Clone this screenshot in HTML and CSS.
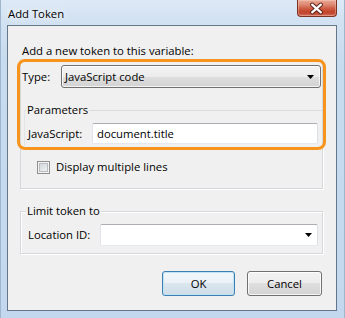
FILE: index.html
```html
<!DOCTYPE html>
<html>
<head>
<meta charset="utf-8">
<title>Add Token</title>
<link rel="stylesheet" href="styles.css">
</head>
<body>
<div class="window">
  <div class="titlebar">
    <span class="title">Add Token</span>
    <span class="close">
      <svg width="40" height="17" viewBox="0 0 40 17">
        <path d="M15.5 4.5 L24.5 12.5 M24.5 4.5 L15.5 12.5" stroke="#5b2219" stroke-width="4.2" stroke-linecap="round" fill="none"/>
        <path d="M15.5 4.5 L24.5 12.5 M24.5 4.5 L15.5 12.5" stroke="#ffffff" stroke-width="2.2" stroke-linecap="round" fill="none"/>
      </svg>
    </span>
  </div>
  <div class="client">
    <div class="heading">Add a new token to this variable:</div>
    <div class="group main">
      <div class="highlight">
        <div class="row type-row">
          <span class="label type-label">Type:</span>
          <div class="combo">
            <span class="combo-text">JavaScript code</span>
            <svg class="arrow" width="7" height="4" viewBox="0 0 7 4"><polygon points="0,0 7,0 3.5,4" fill="#000"/></svg>
          </div>
        </div>
        <div class="params">
          <div class="legend">Parameters</div>
          <div class="row js-row">
            <span class="label js-label">JavaScript:</span>
            <div class="textbox">document.title</div>
          </div>
        </div>
      </div>
      <div class="check-row">
        <span class="checkbox"></span>
        <span>Display multiple lines</span>
      </div>
    </div>
    <div class="group limit">
      <div class="legend">Limit token to</div>
      <div class="row loc-row">
        <span class="label loc-label">Location ID:</span>
        <div class="dropdown">
          <svg class="arrow" width="7" height="4" viewBox="0 0 7 4"><polygon points="0,0 7,0 3.5,4" fill="#000"/></svg>
        </div>
      </div>
    </div>
    <div class="buttons">
      <button class="btn default">OK</button>
      <button class="btn cancel">Cancel</button>
    </div>
  </div>
</div>
</body>
</html>
```

FILE: styles.css
```css
html, body {
  margin: 0;
  padding: 0;
}

body {
  font-family: "Open Sans", "Noto Sans", "DejaVu Sans", sans-serif;
  font-size: 11.3px;
  line-height: 16px;
  color: #000;
}

.window {
  width: 345px;
  height: 318px;
  box-sizing: border-box;
  display: flex;
  flex-direction: column;
  overflow: hidden;
  background: linear-gradient(180deg, #dde9f6 0px, #d2e2f2 20px, #c8dcef 60px, #c3d8ee 100%);
  box-shadow: inset 1px 0 0 #9fb6cf, inset -1px 0 0 #9fb6cf;
}

.titlebar {
  height: 25px;
  flex-shrink: 0;
  display: flex;
  align-items: flex-start;
  padding-left: 8px;
}

.title {
  margin-top: 6px;
  line-height: 16px;
  color: #000;
  text-shadow: 0 0 6px #ffffff, 0 0 10px #ffffff;
}

.close {
  margin-left: auto;
  margin-right: 8px;
  width: 40px;
  height: 17px;
  box-sizing: border-box;
  border: 1px solid #7a3325;
  border-top: 0;
  border-radius: 0 0 4px 4px;
  background: linear-gradient(180deg, #e9a996 0px, #dc8670 5px, #cf6148 8px, #c5492f 11px, #c0452d 13px, #d4735d 16px);
  box-shadow: inset 0 0 0 1px rgba(255, 220, 210, 0.35);
  display: flex;
}

.close svg {
  display: block;
  margin-left: -1px;
}

.client {
  flex: 1;
  margin: 0 8px 7px 7px;
  box-sizing: border-box;
  border: 1px solid #64768a;
  background: #f0f0f0;
  padding: 17px 13px 0 12px;
}

.heading {
  padding-left: 2px;
  height: 16px;
}

.group {
  border: 1px solid #d5d9dd;
  box-shadow: 1px 1px 0 #ffffff, inset 1px 1px 0 #ffffff;
}

.group.main {
  border-top: 0;
  box-shadow: 1px 1px 0 #ffffff;
}

.highlight {
  margin: 0 -4px;
  border: 3px solid #f7941d;
  border-radius: 8px;
  padding: 3px 0 0 0;
}

.row {
  display: flex;
  align-items: center;
}

.type-row {
  height: 23px;
  padding-left: 2px;
}

.type-label {
  width: 39px;
  flex-shrink: 0;
}

.combo {
  flex: 1;
  height: 23px;
  margin-right: 2px;
  box-sizing: border-box;
  border: 1px solid #707070;
  border-radius: 3px;
  background: linear-gradient(180deg, #f3f3f3 0%, #ececec 50%, #dfdfdf 50%, #d2d2d2 100%);
  box-shadow: inset 0 0 0 1px rgba(255, 255, 255, 0.75);
  display: flex;
  align-items: center;
  padding-left: 3px;
}

.combo .arrow {
  margin-left: auto;
  margin-right: 6px;
  display: block;
}

.params {
  margin: 22px 0 0 4px;
  border-left: 1px solid #e2e5e8;
  border-top: 1px solid #d9dcdf;
  padding: 0 0 3px 3px;
}

.legend {
  width: fit-content;
  margin: -9px 0 0 -2px;
  padding: 0 1px;
  height: 16px;
  background: #f0f0f0;
}

.js-row {
  margin-top: 5px;
  height: 21px;
}

.js-label {
  width: 64px;
  flex-shrink: 0;
}

.textbox {
  flex: 1;
  height: 21px;
  margin-right: 5px;
  box-sizing: border-box;
  background: #ffffff;
  border: 1px solid;
  border-color: #abadb3 #dbdfe6 #e3e9ef #e2e3ea;
  border-radius: 2px;
  padding-left: 4px;
  display: flex;
  align-items: center;
}

.check-row {
  margin-top: 9px;
  height: 16px;
  padding: 0 0 13px 16px;
  display: flex;
  align-items: center;
}

.checkbox {
  width: 13px;
  height: 13px;
  box-sizing: border-box;
  margin-right: 6px;
  border: 1px solid #8e8f8f;
  background: linear-gradient(135deg, #cdd1d6 0%, #e4e6e8 55%, #f7f7f7 100%);
  box-shadow: inset 0 0 0 1px #f4f4f4, inset 0 0 0 2px #b9bdc2;
}

.group.limit {
  margin-top: 22px;
  padding: 0 4px 7px 7px;
}

.loc-row {
  margin-top: 5px;
  height: 22px;
}

.loc-label {
  width: 72px;
  flex-shrink: 0;
}

.dropdown {
  flex: 1;
  height: 22px;
  box-sizing: border-box;
  background: #ffffff;
  border: 1px solid;
  border-color: #abadb3 #dbdfe6 #e3e9ef #e2e3ea;
  border-radius: 2px;
  display: flex;
  align-items: center;
}

.dropdown .arrow {
  margin-left: auto;
  margin-right: 5px;
  display: block;
}

.buttons {
  margin-top: 17px;
  display: flex;
  justify-content: flex-end;
  gap: 12px;
  padding-right: 1px;
}

.btn {
  font: inherit;
  color: #000;
  height: 25px;
  padding: 0;
  box-sizing: border-box;
  border: 1px solid #707070;
  border-radius: 3px;
  background: linear-gradient(180deg, #f3f3f3 0%, #ececec 50%, #dfdfdf 50%, #d2d2d2 100%);
  box-shadow: inset 0 0 0 1px rgba(255, 255, 255, 0.8);
  text-align: center;
}

.btn.default {
  width: 73px;
  border-color: #3c7fb1;
  background: linear-gradient(180deg, #f2f7fa 0%, #eaf1f6 50%, #dbe6ee 50%, #cfdde8 100%);
  box-shadow: inset 0 0 0 1px #bfe4f7;
}

.btn.cancel {
  width: 75px;
}
```
